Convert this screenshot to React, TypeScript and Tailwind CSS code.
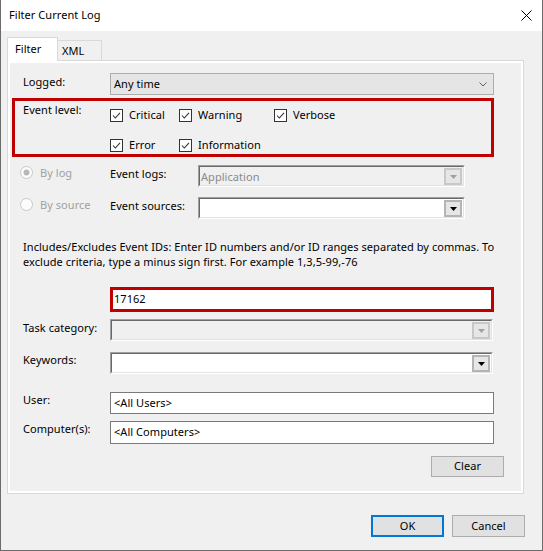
import React from "react";

const font = "font-['Segoe_UI','Noto_Sans',sans-serif]";

function Check({ label }: { label: string }) {
  return (
    <div className="flex items-center h-[16px] gap-[6px] whitespace-nowrap">
      <svg width="13" height="13" viewBox="0 0 13 13" className="shrink-0">
        <rect x="0.5" y="0.5" width="12" height="12" fill="#ffffff" stroke="#333333" />
        <path d="M3 6.5 L5.3 9 L10 3.8" fill="none" stroke="#333333" strokeWidth="1.1" />
      </svg>
      <span>{label}</span>
    </div>
  );
}

function Radio({ label, checked }: { label: string; checked?: boolean }) {
  return (
    <div className="w-[100px] pl-[10px] flex items-start gap-[7px] text-[#a0a0a0] whitespace-nowrap">
      <svg width="13" height="13" viewBox="0 0 13 13" className="shrink-0 mt-[1px]">
        <circle cx="6.5" cy="6.5" r="6" fill="#fcfcfc" stroke="#c8c8c8" />
        {checked && <circle cx="6.5" cy="6.5" r="3" fill="#b8b8b8" />}
      </svg>
      <span className="leading-[16px]">{label}</span>
    </div>
  );
}

function ClassicCombo({ width, disabled, value }: { width: string; disabled?: boolean; value?: string }) {
  return (
    <div className={`${width} h-[22px] flex border border-[#a0a0a0] border-b-white border-r-white`}>
      <div
        className={`flex-1 flex items-center border border-[#696969] border-b-[#e3e3e3] border-r-[#e3e3e3] pl-[1px] pr-[1px] pt-[1px] ${
          disabled ? "bg-[#f0f0f0]" : "bg-white"
        }`}
      >
        <span className="text-[#8a8a8a] leading-[16px]">{value}</span>
        <div
          className={`ml-auto w-[18px] h-[17px] border-2 flex items-center justify-center ${
            disabled ? "border-[#c8c8c8] bg-[#e6e6e6]" : "border-[#b4b4b4] bg-[#e6e6e6]"
          }`}
        >
          <svg width="7" height="4" viewBox="0 0 7 4">
            <path d="M0 0 H7 L3.5 4 Z" fill={disabled ? "#a0a0a0" : "#000000"} />
          </svg>
        </div>
      </div>
    </div>
  );
}

function Label({ children, pt = "pt-[1px]" }: { children: React.ReactNode; pt?: string }) {
  return <div className={`w-[100px] pl-[13px] leading-[16px] ${pt} whitespace-nowrap`}>{children}</div>;
}

function Button({ children, primary }: { children: React.ReactNode; primary?: boolean }) {
  return (
    <div
      className={`w-[73px] h-[22px] flex items-center justify-center bg-[#e1e1e1] ${
        primary ? "border-2 border-[#0078d7]" : "border border-[#adadad]"
      }`}
    >
      {children}
    </div>
  );
}

export default function App() {
  return (
    <div
      className={`w-[543px] h-[551px] bg-[#f0f0f0] border-x border-b border-[#6b6b6b] flex flex-col text-[11px] tracking-[0.05px] text-black ${font}`}
    >
      {/* title bar */}
      <div className="h-[31px] bg-white flex items-center pl-[8px] pr-[10px] shrink-0">
        <span>Filter Current Log</span>
        <svg width="11" height="11" viewBox="0 0 11 11" className="ml-auto">
          <path d="M0.5 0.5 L10.5 10.5 M10.5 0.5 L0.5 10.5" stroke="#000000" strokeWidth="1" />
        </svg>
      </div>

      {/* tabs */}
      <div className="mt-[6px] pl-[6px] h-[24px] -mb-px flex items-end shrink-0">
        <div className="relative z-10 w-[51px] h-[24px] bg-white border border-b-0 border-[#d9d9d9] pl-[7px] pt-[3px] leading-[16px]">
          Filter
        </div>
        <div className="w-[44px] h-[21px] bg-[#f0f0f0] border border-l-0 border-b-0 border-[#d9d9d9] pl-[4px] pt-[2px] leading-[16px]">
          XML
        </div>
      </div>

      {/* panel */}
      <div className="ml-[6px] w-[517px] h-[434px] border border-[#d9d9d9] shrink-0">
        <div className="h-full border-2 border-white flex flex-col">
          {/* Logged */}
          <div className="mt-[10px] flex h-[22px]">
            <Label>Logged:</Label>
            <div className="w-[384px] h-[22px] border border-[#adadad] bg-[#e5e5e5] flex items-center pl-[3px] pr-[6px]">
              <span>Any time</span>
              <svg width="8" height="5" viewBox="0 0 8 5" className="ml-auto">
                <path d="M0.5 0.5 L4 4 L7.5 0.5" fill="none" stroke="#606060" strokeWidth="1" />
              </svg>
            </div>
          </div>

          {/* Event level highlighted */}
          <div className="mt-[3px] ml-[2px] w-[482px] h-[59px] border-[3px] border-[#c00000] flex">
            <div className="w-[95px] pl-[8px] pt-[1px] leading-[16px] whitespace-nowrap">Event level:</div>
            <div className="pt-[6px] grid grid-cols-[69px_95px_auto] gap-y-[13px]">
              <Check label="Critical" />
              <Check label="Warning" />
              <Check label="Verbose" />
              <Check label="Error" />
              <Check label="Information" />
            </div>
          </div>

          {/* By log */}
          <div className="mt-[8px] flex h-[22px]">
            <Radio label="By log" checked />
            <div className="w-[88px] pt-[1px] leading-[16px] whitespace-nowrap">Event logs:</div>
            <ClassicCombo width="w-[267px]" disabled value="Application" />
          </div>

          {/* By source */}
          <div className="mt-[10px] flex h-[22px]">
            <Radio label="By source" />
            <div className="w-[88px] pt-[1px] leading-[16px] whitespace-nowrap">Event sources:</div>
            <ClassicCombo width="w-[267px]" />
          </div>

          {/* description */}
          <div className="mt-[20px] pl-[13px] leading-[15px] whitespace-nowrap">
            <div>Includes/Excludes Event IDs: Enter ID numbers and/or ID ranges separated by commas. To</div>
            <div>exclude criteria, type a minus sign first. For example 1,3,5-99,-76</div>
          </div>

          {/* event id */}
          <div className="mt-[18px] ml-[100px] w-[384px] h-[25px] border-[3px] border-[#c00000] bg-white flex items-center pl-[1px]">
            17162
          </div>

          {/* Task category */}
          <div className="mt-[7px] flex h-[22px]">
            <Label>Task category:</Label>
            <ClassicCombo width="w-[383px]" disabled />
          </div>

          {/* Keywords */}
          <div className="mt-[11px] flex h-[22px]">
            <Label pt="pt-0">Keywords:</Label>
            <ClassicCombo width="w-[383px]" />
          </div>

          {/* User */}
          <div className="mt-[18px] flex h-[22px]">
            <Label pt="pt-0">User:</Label>
            <div className="w-[384px] h-[22px] border border-[#7a7a7a] bg-white flex items-center pl-[3px]">
              &lt;All Users&gt;
            </div>
          </div>

          {/* Computer */}
          <div className="mt-[7px] flex h-[23px]">
            <Label pt="pt-0">Computer(s):</Label>
            <div className="w-[384px] h-[23px] border border-[#7a7a7a] bg-white flex items-center pl-[3px]">
              &lt;All Computers&gt;
            </div>
          </div>

          {/* Clear */}
          <div className="mt-[12px] self-end mr-[17px] w-[73px] h-[21px] border border-[#adadad] bg-[#e1e1e1] flex items-center justify-center">
            Clear
          </div>
        </div>
      </div>

      {/* footer */}
      <div className="mt-[21px] flex justify-end gap-[8px] pr-[17px]">
        <Button primary>OK</Button>
        <Button>Cancel</Button>
      </div>
    </div>
  );
}
